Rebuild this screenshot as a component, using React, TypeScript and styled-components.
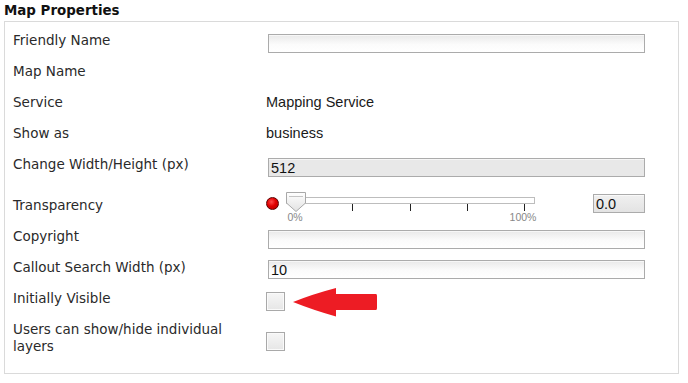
import React from "react";
import styled, { createGlobalStyle } from "styled-components";

const Global = createGlobalStyle`
  html, body { margin: 0; padding: 0; background: #fff; }
  body { font-family: "DejaVu Sans", Verdana, sans-serif; }
`;

const Page = styled.div`
  width: 688px;
  height: 383px;
  padding: 3px 0 0 4px;
  box-sizing: border-box;
  overflow: hidden;
`;

const Title = styled.div`
  font-family: "DejaVu Sans", Verdana, sans-serif;
  font-weight: bold;
  font-size: 13.4px;
  line-height: 16px;
  height: 18px;
  color: #111;
`;

const Box = styled.div`
  width: 675px;
  height: 353px;
  box-sizing: border-box;
  border: 1px solid #dadada;
  padding: 3px 0 0 8px;
`;

const Row = styled.div<{ $h: number }>`
  display: grid;
  grid-template-columns: 253px 379px;
  height: ${(p) => p.$h}px;
  align-items: start;
`;

const Label = styled.div<{ $top?: number }>`
  padding-top: ${(p) => p.$top ?? 7}px;
  font-size: 13.5px;
  line-height: 17px;
  color: #2a2a2a;
  padding-right: 16px;
`;

const Cell = styled.div`
  position: relative;
  display: flex;
  align-items: flex-start;
`;

const Value = styled.div`
  padding-top: 7px;
  font-family: "Liberation Sans", Arial, sans-serif;
  font-size: 14.5px;
  line-height: 17px;
  color: #1a1a1a;
`;

const Field = styled.input<{ $variant?: "grad" | "flat" | "gray"; $w?: number; $top?: number }>`
  margin: ${(p) => p.$top ?? 9}px 0 0 ${(p) => (p.$w ? 0 : 2)}px;
  width: ${(p) => p.$w ?? 377}px;
  height: 19px;
  box-sizing: border-box;
  border: 1px solid #ababab;
  padding: 0 2px;
  font-family: "Liberation Sans", Arial, sans-serif;
  font-size: 14.5px;
  color: #111;
  outline: none;
  background: ${(p) =>
    p.$variant === "flat"
      ? "#e8e8e8"
      : p.$variant === "gray"
      ? "linear-gradient(#f0f0f0, #e3e3e3)"
      : "linear-gradient(#e9e9e9, #fbfbfb 55%, #fff)"};
  box-shadow: inset 0 1px 0 rgba(255,255,255,0.6);
`;

const Dot = styled.div`
  margin-top: 17px;
  width: 13px;
  height: 13px;
  box-sizing: border-box;
  border-radius: 50%;
  border: 1.5px solid #5a0000;
  background: radial-gradient(circle at 40% 35%, #ff4a4a 0%, #e00000 45%, #b00000 100%);
`;

const Slider = styled.div`
  position: relative;
  margin: 12px 0 0 7px;
  width: 250px;
  height: 29px;
`;

const Track = styled.div`
  position: absolute;
  left: 0;
  top: 5px;
  width: 249px;
  height: 7px;
  box-sizing: border-box;
  border: 1px solid #bdbdbd;
  background: #fff;
`;

const Tick = styled.div`
  position: absolute;
  top: 12px;
  width: 1.3px;
  height: 7px;
  background: #222;
`;

const Pct = styled.div`
  position: absolute;
  top: 20px;
  transform: translateX(-50%);
  font-family: "Liberation Sans", Arial, sans-serif;
  font-size: 10.5px;
  line-height: 10px;
  color: #888;
`;

const Thumb = styled.svg`
  position: absolute;
  left: 0;
  top: 0;
`;

const Check = styled.div<{ $top: number }>`
  margin-top: ${(p) => p.$top}px;
  width: 19px;
  height: 19px;
  box-sizing: border-box;
  border: 1.5px solid #a9a9a9;
  box-shadow: inset 0 0 0 1px #fafafa;
  background: linear-gradient(#f6f6f6, #e6e6e6);
`;

const Arrow = styled.svg`
  position: absolute;
  left: 27px;
  top: 5px;
`;

const Push = styled.div`
  margin-left: auto;
`;

export default function App() {
  const ticks = [66, 124, 181, 238];
  return (
    <>
      <Global />
      <Page>
        <Title>Map Properties</Title>
        <Box>
          <Row $h={31}>
            <Label>Friendly Name</Label>
            <Cell>
              <Field readOnly value="" $variant="grad" />
            </Cell>
          </Row>
          <Row $h={31}>
            <Label>Map Name</Label>
            <Cell />
          </Row>
          <Row $h={31}>
            <Label>Service</Label>
            <Cell>
              <Value>Mapping Service</Value>
            </Cell>
          </Row>
          <Row $h={31}>
            <Label>Show as</Label>
            <Cell>
              <Value>business</Value>
            </Cell>
          </Row>
          <Row $h={31}>
            <Label>Change Width/Height (px)</Label>
            <Cell>
              <Field readOnly value="512" $variant="flat" />
            </Cell>
          </Row>
          <Row $h={41}>
            <Label $top={17}>Transparency</Label>
            <Cell>
              <Dot />
              <Slider>
                <Track />
                {ticks.map((t) => (
                  <Tick key={t} style={{ left: t }} />
                ))}
                <Pct style={{ left: 9 }}>0%</Pct>
                <Pct style={{ left: 237 }}>100%</Pct>
                <Thumb width="21" height="20" viewBox="0 0 21 20">
                  <defs>
                    <linearGradient id="tg" x1="0" y1="0" x2="0" y2="1">
                      <stop offset="0" stopColor="#ffffff" />
                      <stop offset="1" stopColor="#e2e2e2" />
                    </linearGradient>
                  </defs>
                  <path
                    d="M0.5 0.5 H19.5 V11 L10 19.5 L0.5 11 Z"
                    fill="url(#tg)"
                    stroke="#a8a8a8"
                    strokeWidth="1"
                  />
                  <line x1="3" y1="4.5" x2="17" y2="4.5" stroke="#c4c4c4" strokeWidth="1" />
                </Thumb>
              </Slider>
              <Push>
                <Field readOnly value="0.0" $variant="gray" $w={52} $top={14} />
              </Push>
            </Cell>
          </Row>
          <Row $h={31}>
            <Label>Copyright</Label>
            <Cell>
              <Field readOnly value="" $variant="grad" />
            </Cell>
          </Row>
          <Row $h={31}>
            <Label>Callout Search Width (px)</Label>
            <Cell>
              <Field readOnly value="10" $variant="grad" $top={8} />
            </Cell>
          </Row>
          <Row $h={31}>
            <Label>Initially Visible</Label>
            <Cell>
              <Check $top={9} />
              <Arrow width="85" height="29" viewBox="0 0 85 29">
                <path
                  d="M0 14 Q20 6 43 0 L43 6 L83 6 Q84 6 84 8 L84 20 Q84 22 83 22 L43 22 L43 28.5 Q20 22 0 14 Z"
                  fill="#ed1c24"
                />
              </Arrow>
            </Cell>
          </Row>
          <Row $h={56}>
            <Label>Users can show/hide individual layers</Label>
            <Cell>
              <Check $top={18} />
            </Cell>
          </Row>
        </Box>
      </Page>
    </>
  );
}
